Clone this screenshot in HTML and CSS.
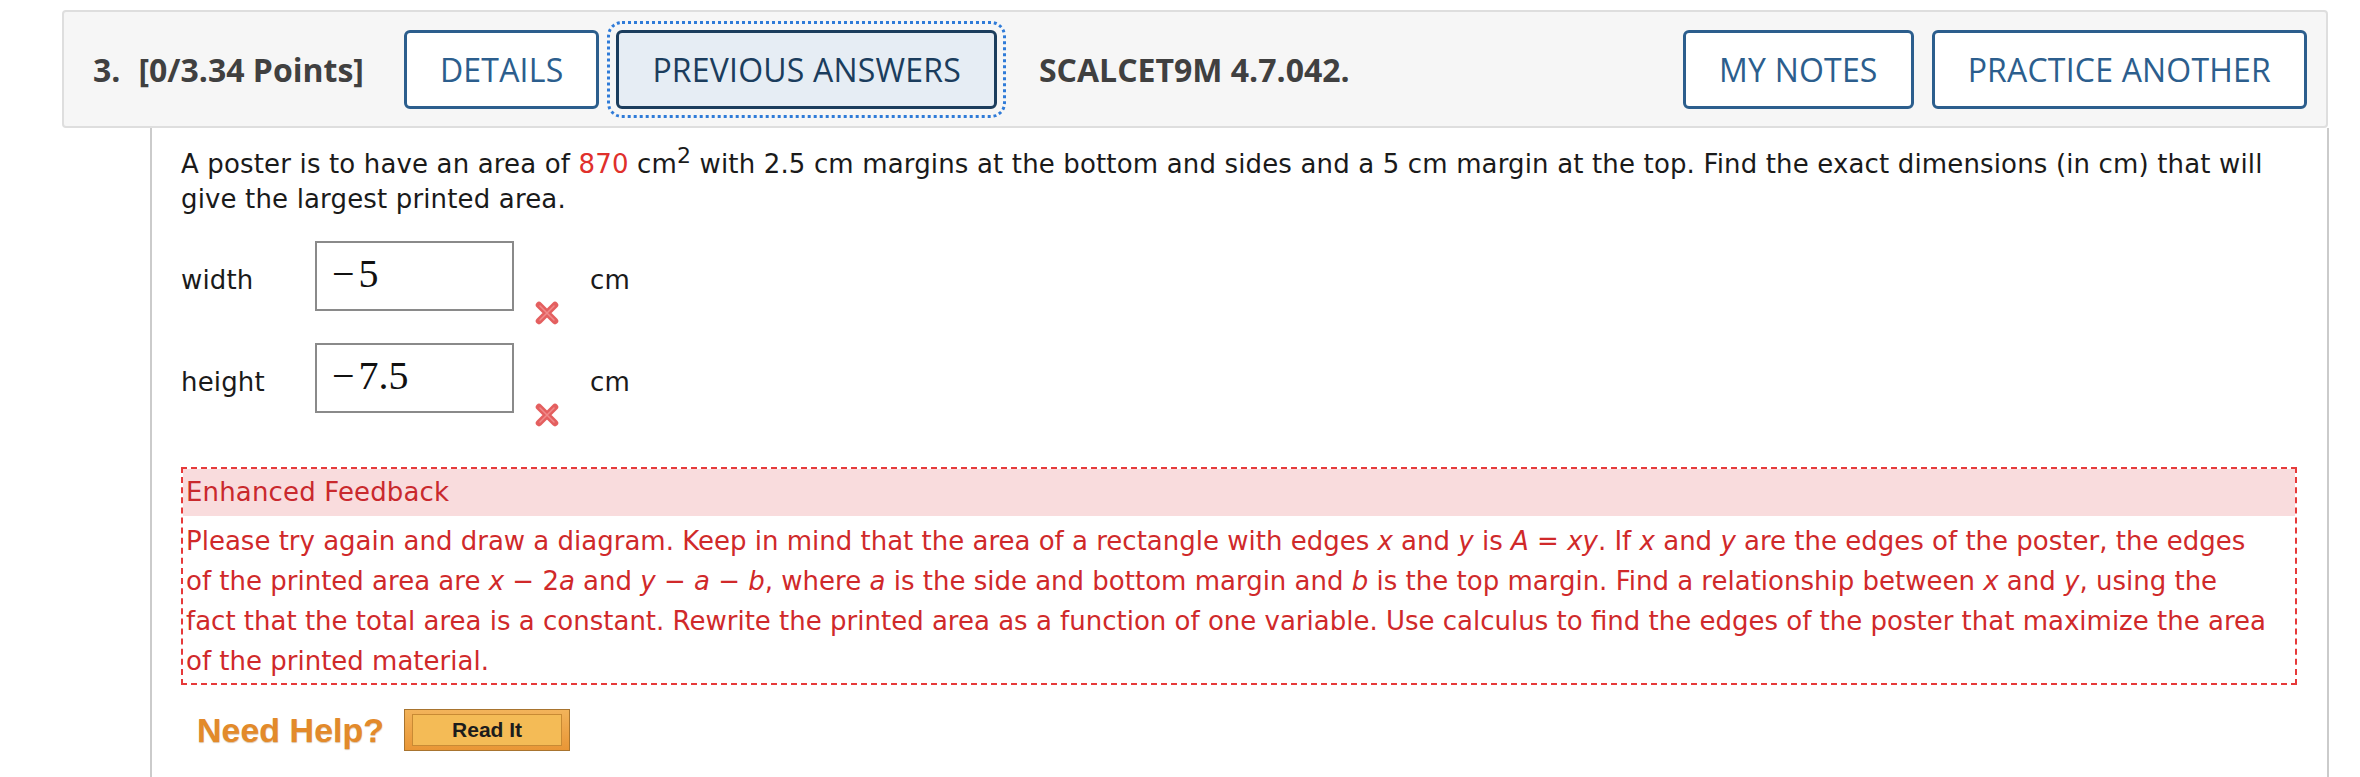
FILE: index.html
```html
<!DOCTYPE html>
<html lang="en">

<head>
    <meta charset="utf-8">
    <meta name="viewport" content="width=device-width, initial-scale=1.0">
    <title>Question 3</title>
    <link rel="stylesheet" href="styles.css">
</head>

<body>
    <header class="q-head">
        <span class="num">3.</span>
        <span class="points">[0/3.34 Points]</span>
        <button class="btn">DETAILS</button>
        <button class="btn active">PREVIOUS ANSWERS</button>
        <span class="code">SCALCET9M 4.7.042.</span>
        <div class="head-right">
            <button class="btn">MY NOTES</button>
            <button class="btn">PRACTICE ANOTHER</button>
        </div>
    </header>

    <section class="q-body">
        <p class="text">A poster is to have an area of <span class="red">870</span> cm<sup>2</sup> with 2.5 cm margins at the bottom and sides and a 5 cm margin at the top. Find the exact dimensions (in cm) that will give the largest printed area.</p>

        <div class="row">
            <span class="label">width</span>
            <div class="answer"><span class="minus">&minus;</span>5</div>
            <svg class="wrong" width="26" height="26" viewBox="0 0 26 26">
                <path d="M5 5 L21 21 M21 5 L5 21" stroke="#e45f5f" stroke-width="6.5" stroke-linecap="round" />
                <path d="M6 6 L20 20 M20 6 L6 20" stroke="#ef8a8a" stroke-width="1.5" stroke-linecap="round" />
            </svg>
            <span class="unit">cm</span>
        </div>

        <div class="row second">
            <span class="label">height</span>
            <div class="answer"><span class="minus">&minus;</span>7.5</div>
            <svg class="wrong" width="26" height="26" viewBox="0 0 26 26">
                <path d="M5 5 L21 21 M21 5 L5 21" stroke="#e45f5f" stroke-width="6.5" stroke-linecap="round" />
                <path d="M6 6 L20 20 M20 6 L6 20" stroke="#ef8a8a" stroke-width="1.5" stroke-linecap="round" />
            </svg>
            <span class="unit">cm</span>
        </div>

        <div class="feedback">
            <div class="fb-title">Enhanced Feedback</div>
            <p class="fb-text">Please try again and draw a diagram. Keep in mind that the area of a rectangle with edges <i>x</i> and <i>y</i> is <i>A</i> = <i>xy</i>. If <i>x</i> and <i>y</i> are the edges of the poster, the edges<br>
                of the printed area are <i>x</i> &minus; 2<i>a</i> and <i>y</i> &minus; <i>a</i> &minus; <i>b</i>, where <i>a</i> is the side and bottom margin and <i>b</i> is the top margin. Find a relationship between <i>x</i> and <i>y</i>, using the<br>
                fact that the total area is a constant. Rewrite the printed area as a function of one variable. Use calculus to find the edges of the poster that maximize the area<br>
                of the printed material.</p>
        </div>

        <div class="help">
            <span class="need">Need Help?</span>
            <button class="read"><span>Read It</span></button>
        </div>
    </section>
</body>

</html>
```

FILE: styles.css
```css
body {
    margin: 0;
    background: #fff;
    font-family: "DejaVu Sans", Verdana, sans-serif;
}

/* header bar */

.q-head {
    display: flex;
    align-items: center;
    box-sizing: border-box;
    height: 118px;
    margin: 10px 32px 0 62px;
    padding: 0 19px 0 29px;
    background: #f6f6f6;
    border: 2px solid #dedede;
    border-radius: 4px;
    font-family: "Open Sans", sans-serif;
    font-size: 32px;
    color: #404040;
}

.num,
.points,
.code {
    font-weight: 700;
}

.num {
    margin-right: 18px;
}

.points {
    margin-right: 40px;
}

.code {
    margin-left: 42px;
}

.btn {
    box-sizing: border-box;
    height: 79px;
    padding: 0 33px;
    background: #fff;
    border: 3px solid #2c5e8d;
    border-radius: 6px;
    color: #2c5e8d;
    font-family: "Open Sans", sans-serif;
    font-size: 32px;
    letter-spacing: 0.2px;
    cursor: pointer;
}

.btn.active {
    margin-left: 17px;
    background: #e6edf4;
    border-color: #1b3d5d;
    color: #1b3d5d;
    outline: 3px dotted #2f7bd8;
    outline-offset: 6px;
}

.head-right {
    display: flex;
    gap: 18px;
    margin-left: auto;
}

/* question body */

.q-body {
    margin: 0 31px 0 150px;
    padding: 19px 30px 30px 29px;
    border-left: 2px solid #cbcbcb;
    border-right: 2px solid #cbcbcb;
    font-size: 26px;
    letter-spacing: 0.15px;
    color: #1a1a1a;
}

.text {
    margin: 0;
    line-height: 35px;
}

.text sup {
    font-size: 22px;
    line-height: 0;
}

.red {
    color: #e0302b;
}

.row {
    display: flex;
    align-items: center;
    margin-top: 24px;
}

.row.second {
    margin-top: 32px;
}

.label {
    width: 134px;
    padding-top: 8px;
    line-height: 35px;
}

.answer {
    box-sizing: border-box;
    width: 199px;
    height: 70px;
    padding: 8px 0 0 15px;
    border: 2px solid #8a8a8a;
    font-family: "Liberation Serif", serif;
    font-size: 40px;
    line-height: 46px;
    letter-spacing: 0;
    color: #111;
}

.minus {
    margin-right: 4px;
}

.wrong {
    align-self: flex-end;
    margin: 0 0 -15px 20px;
}

.unit {
    margin-left: 30px;
    padding-top: 8px;
    line-height: 35px;
}

/* feedback */

.feedback {
    margin-top: 54px;
    border: 2px dashed #e63a3a;
    color: #d0292a;
}

.fb-title {
    height: 47px;
    padding-left: 3px;
    background: #f9dcdd;
    line-height: 47px;
    color: #c9292d;
}

.fb-text {
    margin: 5px 0 2px;
    padding: 0 0 0 3px;
    line-height: 40px;
    letter-spacing: 0;
    white-space: nowrap;
}

/* need help */

.help {
    display: flex;
    align-items: center;
    margin-top: 24px;
    padding-left: 16px;
    letter-spacing: 0;
}

.need {
    margin-right: 20px;
    font-family: "Liberation Sans", Arial, sans-serif;
    font-weight: 700;
    font-size: 34px;
    color: #e38a2a;
    text-shadow: 0 1px 1px rgba(150, 80, 0, 0.35);
}

.read {
    box-sizing: border-box;
    width: 166px;
    height: 42px;
    padding: 4px 7px;
    background: linear-gradient(to bottom, #f2b35a, #e99636);
    border: 1px solid #a8742f;
    cursor: pointer;
}

.read span {
    display: block;
    height: 100%;
    box-sizing: border-box;
    background: #f4bb56;
    border: 1px solid #c88a34;
    font-family: "Liberation Sans", Arial, sans-serif;
    font-weight: 700;
    font-size: 21px;
    line-height: 30px;
    color: #1c1c1c;
}
```
